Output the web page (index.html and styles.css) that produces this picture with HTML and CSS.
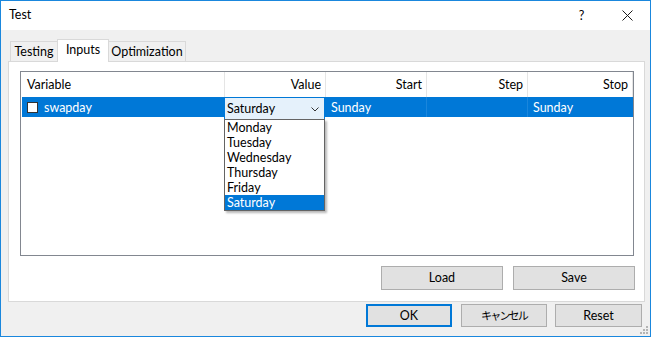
FILE: index.html
```html
<!DOCTYPE html>
<html>
<head>
<meta charset="utf-8">
<link rel="stylesheet" href="styles.css">
</head>
<body>
<div class="window">
  <div class="titlebar">
    <span class="title">Test</span>
    <div class="caption-btns">
      <span class="cap help">?</span>
      <span class="cap close"><svg width="11" height="11" viewBox="0 0 11 11"><path d="M0.5 0.5 L10.5 10.5 M10.5 0.5 L0.5 10.5" stroke="#1a1a1a" stroke-width="1" fill="none"/></svg></span>
    </div>
  </div>
  <div class="client">
    <div class="tabs">
      <div class="tab tab-testing">Testing</div>
      <div class="tab tab-sel">Inputs</div>
      <div class="tab tab-opt">Optimization</div>
    </div>
    <div class="panel">
      <div class="list">
        <div class="hdr">
          <div class="hc hc-left">Variable</div>
          <div class="hc">Value</div>
          <div class="hc">Start</div>
          <div class="hc">Step</div>
          <div class="hc">Stop</div>
        </div>
        <div class="row">
          <div class="c c-var"><span class="chk"></span>swapday</div>
          <div class="c c-val">
            <div class="combo"><span>Saturday</span><svg width="8" height="5" viewBox="0 0 8 5"><path d="M0.5 0.5 L4 4 L7.5 0.5" stroke="#333" stroke-width="1" fill="none"/></svg></div>
            <div class="dropdown">
              <div class="opt">Monday</div>
              <div class="opt">Tuesday</div>
              <div class="opt">Wednesday</div>
              <div class="opt">Thursday</div>
              <div class="opt">Friday</div>
              <div class="opt opt-sel">Saturday</div>
            </div>
          </div>
          <div class="c c-start">Sunday</div>
          <div class="c c-step"></div>
          <div class="c c-stop">Sunday</div>
        </div>
      </div>
      <div class="panel-btns">
        <div class="btn btn-wide">Load</div>
        <div class="btn btn-wide">Save</div>
      </div>
    </div>
    <div class="dlg-btns">
      <div class="btn btn-dlg btn-default">OK</div>
      <div class="btn btn-dlg jp">キャンセル</div>
      <div class="btn btn-dlg btn-reset">Reset</div>
    </div>
  </div>
  <svg class="grip" width="9" height="9" viewBox="0 0 9 9">
    <rect x="6" y="0" width="2" height="2" fill="#b4b4b4"/>
    <rect x="3" y="3" width="2" height="2" fill="#b4b4b4"/>
    <rect x="6" y="3" width="2" height="2" fill="#b4b4b4"/>
    <rect x="0" y="6" width="2" height="2" fill="#b4b4b4"/>
    <rect x="3" y="6" width="2" height="2" fill="#b4b4b4"/>
    <rect x="6" y="6" width="2" height="2" fill="#b4b4b4"/>
  </svg>
</div>
</body>
</html>
```

FILE: styles.css
```css
* { box-sizing: border-box; }
html, body { margin: 0; padding: 0; background: #fff; }
body {
  font-family: "Lato", "Noto Sans", sans-serif;
  font-size: 12.5px;
  color: #000;
}
.window {
  position: relative;
  width: 651px;
  height: 337px;
  border: 1px solid #1a87dd;
  background: #f0f0f0;
  display: flex;
  flex-direction: column;
}
.titlebar {
  height: 29px;
  background: #fff;
  display: flex;
  align-items: center;
  justify-content: space-between;
  padding-left: 8px;
}
.title { line-height: 1; }
.caption-btns { display: flex; height: 100%; }
.cap {
  width: 46px;
  height: 100%;
  display: flex;
  align-items: center;
  justify-content: center;
}
.help { padding-left: 1px; padding-bottom: 1px; }
.close svg { display: block; margin-left: 1px; }
.client {
  flex: 1;
  padding: 9px 5px 9px 7px;
  display: flex;
  flex-direction: column;
}
.tabs {
  height: 22px;
  display: flex;
  align-items: flex-end;
  padding-left: 2px;
}
.tab {
  height: 20px;
  display: flex;
  align-items: center;
  justify-content: center;
  background: #f0f0f0;
  border-top: 1px solid #d9d9d9;
  padding-bottom: 1px;
}
.tab-testing { width: 47px; border-left: 1px solid #d9d9d9; }
.tab-sel {
  position: relative;
  z-index: 1;
  width: 52px;
  height: 23px;
  margin-bottom: -1px;
  background: #fff;
  border-left: 1px solid #d9d9d9;
  border-right: 1px solid #d9d9d9;
  padding-bottom: 3px;
}
.tab-opt { width: 77px; border-right: 1px solid #d9d9d9; }
.panel {
  height: 241px;
  background: #fff;
  border: 1px solid #d9d9d9;
  display: flex;
  flex-direction: column;
  padding: 9px 9px 0 11px;
}
.list {
  width: 614px;
  height: 185px;
  border: 1px solid #828790;
  background: #fff;
}
.hdr {
  height: 25px;
  display: grid;
  grid-template-columns: 204px 101px 101px 101px 105px;
}
.hc {
  border-right: 1px solid #e5e5e5;
  display: flex;
  align-items: center;
  justify-content: flex-end;
  padding-right: 4px;
  padding-bottom: 1px;
}
.hc-left { justify-content: flex-start; padding-left: 6px; }
.row {
  margin-left: 1px;
  height: 20px;
  width: 611px;
  background: #0078d7;
  color: #fff;
  display: flex;
}
.c {
  display: flex;
  align-items: center;
  height: 20px;
}
.c-var { width: 202px; padding-left: 5px; }
.chk {
  width: 11px;
  height: 11px;
  border: 1px solid #333;
  background: #fff;
  margin-right: 6px;
}
.c-val { width: 101px; position: relative; align-items: flex-start; }
.combo {
  width: 101px;
  height: 23px;
  border: 1px solid #0078d7;
  background: #e5f1fb;
  color: #000;
  display: flex;
  align-items: center;
  justify-content: space-between;
  padding: 0 5px 1px 2px;
}
.combo svg { display: block; margin-top: 2px; }
.dropdown {
  position: absolute;
  top: 22px;
  left: 0;
  width: 101px;
  border: 1px solid #646464;
  background: #fff;
  color: #000;
  box-shadow: 2px 2px 2px rgba(0,0,0,0.28);
  z-index: 2;
}
.opt {
  height: 15px;
  line-height: 15px;
  padding-left: 2px;
}
.opt-sel { background: #0078d7; color: #fff; }
.c-start { width: 102px; padding-left: 6px; border-right: 1px solid #1a86dc; }
.c-step { width: 101px; border-right: 1px solid #1a86dc; }
.c-stop { flex: 1; padding-left: 5px; }
.panel-btns {
  margin-top: 10px;
  display: flex;
  justify-content: flex-end;
  gap: 10px;
}
.btn {
  height: 24px;
  background: #e1e1e1;
  border: 1px solid #adadad;
  display: flex;
  align-items: center;
  justify-content: center;
  padding-bottom: 1px;
}
.btn-wide { width: 122px; }
.dlg-btns {
  margin-top: 2px;
  display: flex;
  justify-content: flex-end;
  gap: 9px;
  padding-right: 3px;
}
.btn-dlg { width: 86px; height: 23px; }
.btn-default { border: 2px solid #0078d7; }
.btn-reset { width: 87px; margin-left: -1px; }
.jp {
  font-family: "Noto Sans CJK JP", sans-serif;
  font-size: 11px;
  letter-spacing: -1.8px;
}
.grip {
  position: absolute;
  left: 639px;
  top: 325px;
}
```
